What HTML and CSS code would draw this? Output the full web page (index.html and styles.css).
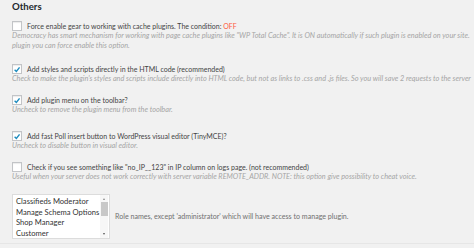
FILE: index.html
```html
<!DOCTYPE html>
<html>
<head>
<meta charset="utf-8">
<link rel="stylesheet" href="styles.css">
</head>
<body>
<div class="page">
  <h3 class="title">Others</h3>

  <div class="opt opt-1">
    <label class="lbl"><span class="cb"></span><span>Force enable gear to working with cache plugins. The condition: <span class="off">OFF</span></span></label>
    <div class="desc">Democracy has smart mechanism for working with page cache plugins like "WP Total Cache". It is ON automatically if such plugin is enabled on your site.</div>
    <div class="desc">plugin you can force enable this option.</div>
  </div>

  <div class="opt opt-2">
    <label class="lbl"><span class="cb on"><svg viewBox="0 0 10 10"><path d="M2 5.2 L4.2 7.4 L8.2 2.4" /></svg></span><span>Add styles and scripts directly in the HTML code (recommended)</span></label>
    <div class="desc">Check to make the plugin's styles and scripts include directly into HTML code, but not as links to .css and .js files. So you will save 2 requests to the server</div>
  </div>

  <div class="opt opt-3">
    <label class="lbl"><span class="cb on"><svg viewBox="0 0 10 10"><path d="M2 5.2 L4.2 7.4 L8.2 2.4" /></svg></span><span>Add plugin menu on the toolbar?</span></label>
    <div class="desc">Uncheck to remove the plugin menu from the toolbar.</div>
  </div>

  <div class="opt opt-4">
    <label class="lbl"><span class="cb on"><svg viewBox="0 0 10 10"><path d="M2 5.2 L4.2 7.4 L8.2 2.4" /></svg></span><span>Add fast Poll insert button to WordPress visual editor (TinyMCE)?</span></label>
    <div class="desc">Uncheck to disable button in visual editor.</div>
  </div>

  <div class="opt opt-5">
    <label class="lbl"><span class="cb"></span><span>Check if you see something like "no_IP__123" in IP column on logs page. (not recommended)</span></label>
    <div class="desc">Useful when your server does not work correctly with server variable REMOTE_ADDR. NOTE: this option give possibility to cheat voice.</div>
  </div>

  <div class="roles">
    <div class="listbox">
      <ul class="items">
        <li>Classifieds Moderator</li>
        <li>Manage Schema Options</li>
        <li>Shop Manager</li>
        <li>Customer</li>
      </ul>
      <div class="sbar">
        <span class="arr up"></span>
        <span class="thumb"></span>
        <span class="arr down"></span>
      </div>
    </div>
    <span class="roles-note">Role names, except 'administrator' which will have access to manage plugin.</span>
  </div>
</div>
</body>
</html>
```

FILE: styles.css
```css
html, body {
  margin: 0;
  padding: 0;
}
body {
  width: 474px;
  height: 248px;
  overflow: hidden;
  background: #f1f1f1;
  font-family: Lato, "Open Sans", sans-serif;
  color: #444;
}
.page {
  width: 474px;
  height: 244px;
  overflow: hidden;
  padding: 0 0 0 12px;
  box-sizing: border-box;
  border-bottom: 1px solid #e6e6e6;
}
.title {
  margin: 0;
  padding-top: 1px;
  font-size: 9.6px;
  line-height: 12px;
  font-weight: 700;
  color: #23282d;
}
.opt {
  white-space: nowrap;
}
.opt-1 { margin-top: 8px; }
.opt-2 { margin-top: 13px; }
.opt-3 { margin-top: 11px; }
.opt-4 { margin-top: 16px; }
.opt-5 { margin-top: 11px; }
.lbl {
  display: flex;
  align-items: center;
  gap: 5px;
  height: 10px;
  font-size: 7px;
  line-height: 10px;
  color: #444;
}
.cb {
  flex: none;
  width: 8px;
  height: 8px;
  background: #fff;
  border: 1px solid #c2c4c7;
  box-shadow: inset 0 1px 1px rgba(0,0,0,0.08);
  display: flex;
  align-items: center;
  justify-content: center;
}
.cb svg {
  width: 9px;
  height: 9px;
}
.cb svg path {
  fill: none;
  stroke: #1e8cbe;
  stroke-width: 1.8;
}
.off {
  color: #ff5a3c;
}
.desc {
  font-size: 7.3px;
  line-height: 10px;
  font-style: italic;
  color: #a5a5a5;
}
.roles {
  margin-top: 12px;
  display: flex;
  align-items: center;
  gap: 5px;
}
.listbox {
  width: 98px;
  height: 45px;
  box-sizing: border-box;
  background: #fff;
  border: 1px solid #dcdcdc;
  display: flex;
}
.items {
  list-style: none;
  margin: 0;
  padding: 1px 0 0 3px;
  flex: 1;
  overflow: hidden;
}
.items li {
  font-size: 7.6px;
  line-height: 10.5px;
  color: #333;
  white-space: nowrap;
}
.sbar {
  width: 8px;
  flex: none;
  display: flex;
  flex-direction: column;
  align-items: center;
  background: #f7f7f7;
  margin-right: 1px;
}
.arr {
  width: 0;
  height: 0;
  border-left: 1.5px solid transparent;
  border-right: 1.5px solid transparent;
}
.arr.up {
  margin-top: 3px;
  border-bottom: 2px solid #888;
}
.arr.down {
  margin-top: auto;
  margin-bottom: 3px;
  border-top: 2px solid #555;
}
.thumb {
  width: 7px;
  height: 14px;
  margin-top: 2px;
  background: #c8c8c8;
}
.roles-note {
  font-size: 7.1px;
  color: #707070;
  white-space: nowrap;
}
```
